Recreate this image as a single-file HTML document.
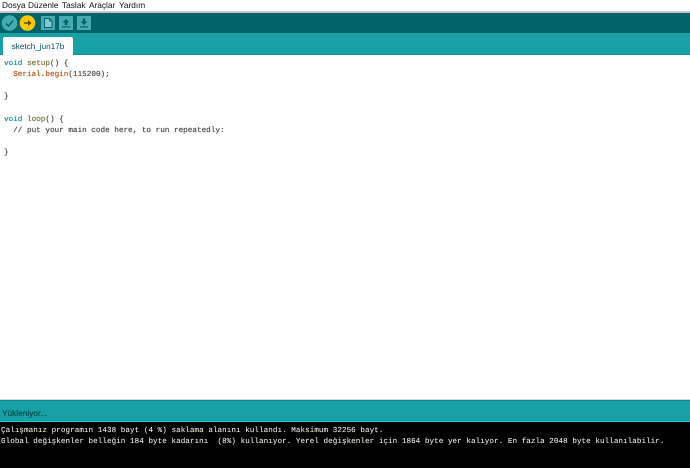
<!DOCTYPE html>
<html><head><meta charset="utf-8"><style>
html,body{margin:0;padding:0;background:#fff}
body{width:690px;height:468px;position:relative;overflow:hidden;text-rendering:geometricPrecision}
div{position:absolute}
.m{top:0;font:8.3px/11px "Liberation Sans",sans-serif;color:#111;white-space:pre}
.c{font:7.67px/15px "Liberation Mono",monospace;white-space:pre;left:4px;color:#444;text-shadow:0 0 .6px rgba(70,70,70,.7)}
.o{font:7.58px/11px "Liberation Mono",monospace;letter-spacing:.06px;white-space:pre;left:1px;color:#eeeee6;text-shadow:0 0 .5px rgba(240,240,230,.4)}
.k{color:#00979c}.f{color:#d35400}.g{color:#7a7a30}
</style></head><body>
<div class="m" style="left:2px">Dosya</div>
<div class="m" style="left:28px">Düzenle</div>
<div class="m" style="left:62px">Taslak</div>
<div class="m" style="left:89px">Araçlar</div>
<div class="m" style="left:119px">Yardım</div>
<div style="left:0;top:11px;width:690px;height:2px;background:#c4c8c8"></div>
<div style="left:0;top:13px;width:690px;height:20px;background:#006468"></div>
<div style="left:0;top:33px;width:690px;height:21px;background:#17a1a5"></div>
<div style="left:0;top:54px;width:690px;height:1px;background:#0f9a9e"></div>
<svg style="position:absolute;left:0;top:13px" width="100" height="20" viewBox="0 0 100 20">
<circle cx="9.500" cy="10" r="7.800" fill="#43acb0"/>
<path d="M6 10.500L8.500 13L13 7.500" fill="none" stroke="#006468" stroke-width="1.500"/>
<circle cx="27.500" cy="10" r="7.800" fill="#ffc800"/>
<path d="M24 10H30" fill="none" stroke="#5b4a00" stroke-width="1.500"/><path d="M28 7L31.500 10L28 13Z" fill="#5b4a00"/>
<rect x="41" y="3" width="14" height="14" fill="#43acb0"/>
<path d="M44.500 5.500H49.500L52 8V14.500H44.500Z" fill="#7fcacc" stroke="#006468" stroke-width="1"/>
<path d="M49.500 5.500V8H52" fill="none" stroke="#006468" stroke-width=".8"/>
<rect x="59" y="3" width="14" height="14" fill="#43acb0"/>
<path d="M66 6L69.500 9.500H67.300V12H64.700V9.500H62.500Z" fill="#006468"/><rect x="62" y="13.300" width="8" height="1.200" fill="#006468"/>
<rect x="77" y="3" width="14" height="14" fill="#43acb0"/>
<path d="M84 12L80.500 8.500H82.700V5.500H85.300V8.500H87.500Z" fill="#006468"/><rect x="80" y="13.300" width="8" height="1.200" fill="#006468"/>
</svg>
<div style="left:3px;top:37px;width:70px;height:18px;background:#fff;border-radius:2px 2px 0 0;font:8.1px/20px 'Liberation Sans',sans-serif;letter-spacing:.03px;color:#00565a;text-align:center">sketch_jun17b</div>
<div class="c" style="top:57px"><span class="k">void</span> <span class="g">setup</span>() {</div>
<div class="c" style="top:68px">  <span class="f">Serial</span>.<span class="f">begin</span>(115200);</div>
<div class="c" style="top:90px">}</div>
<div class="c" style="top:113px"><span class="k">void</span> <span class="g">loop</span>() {</div>
<div class="c" style="top:124px">  // put your main code here, to run repeatedly:</div>
<div class="c" style="top:146px">}</div>
<div style="left:0;top:399px;width:690px;height:1px;background:#d8d8d8"></div>
<div style="left:0;top:400px;width:690px;height:22px;background:#17a1a5;border-top:1px solid #0a8a8e;border-bottom:1px solid #2fc4c8;box-sizing:border-box;font:8.3px/24px 'Liberation Sans',sans-serif;color:#00474b;text-shadow:0 0 .5px rgba(0,70,75,.6);padding-left:2px">Yükleniyor...</div>
<div style="left:0;top:422px;width:690px;height:46px;background:#000"></div>
<div class="o" style="top:426px">Çalışmanız programın 1438 bayt (4 %) saklama alanını kullandı. Maksimum 32256 bayt.</div>
<div class="o" style="top:437px">Global değişkenler belleğin 184 byte kadarını  (8%) kullanıyor. Yerel değişkenler için 1864 byte yer kalıyor. En fazla 2048 byte kullanılabilir.</div>
</body></html>
